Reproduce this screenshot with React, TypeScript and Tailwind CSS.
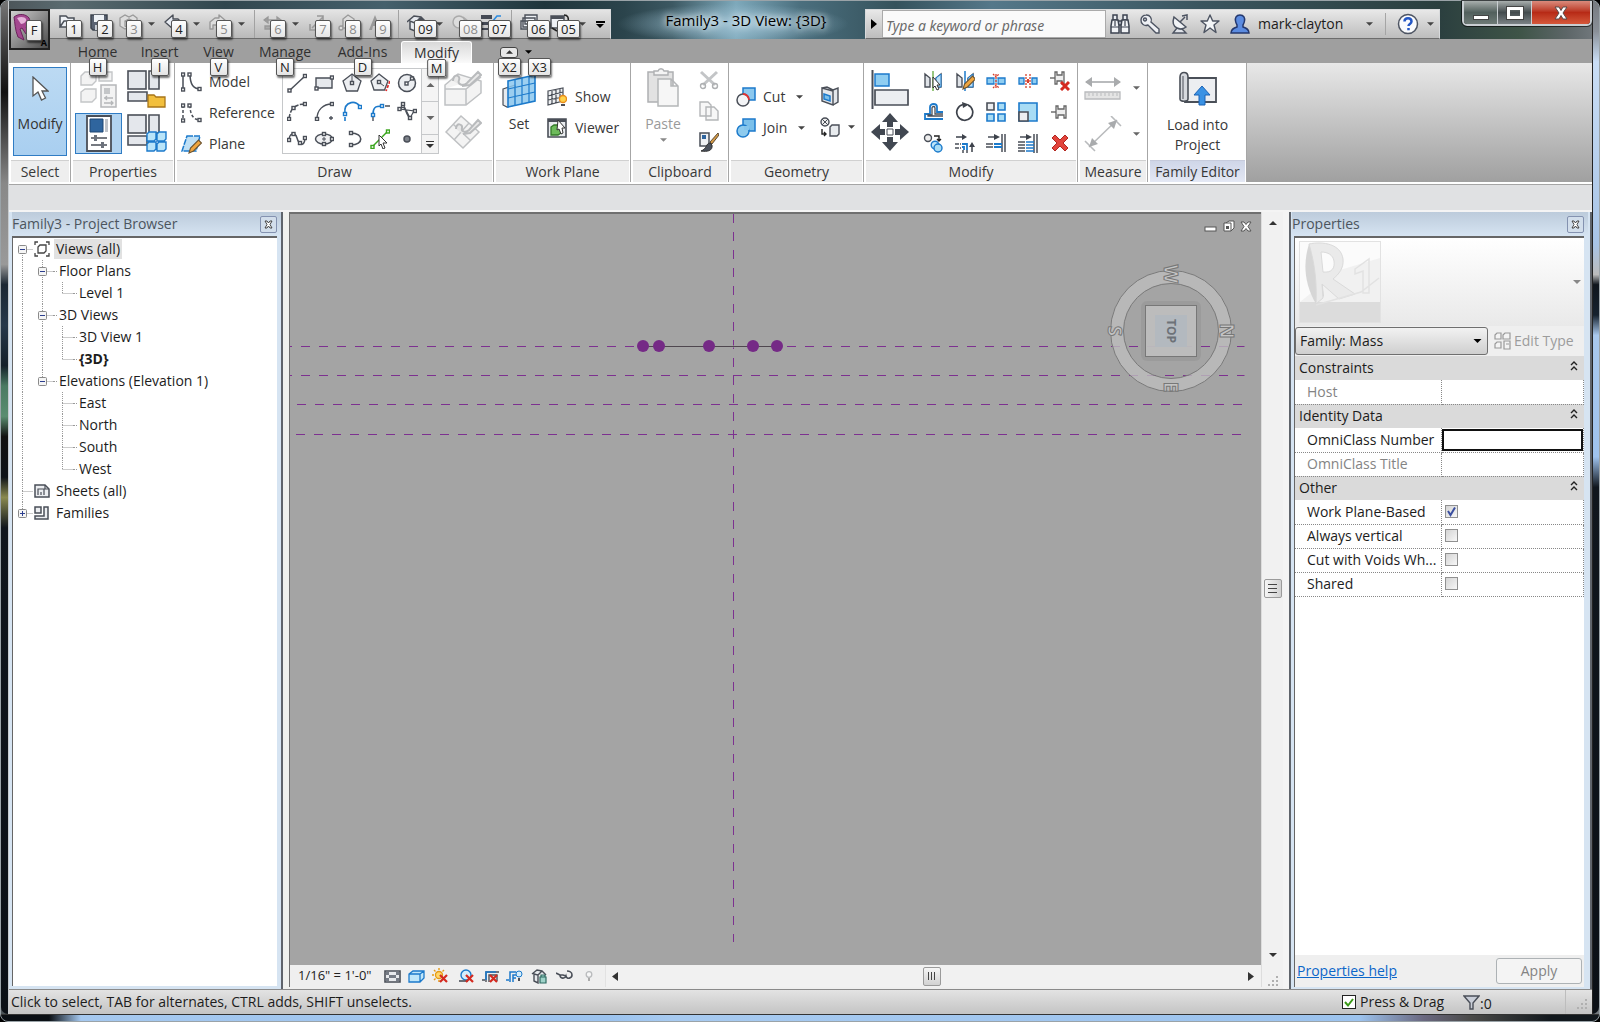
import React from "react";

const D = "#4a4f58";
const B = "#1c7acb";
const L = "#b9bbbd";

type IconProps = { w?: number; h?: number; vb?: string; className?: string; children?: React.ReactNode };

function Ico({ w = 20, h = 20, vb, className = "", children }: IconProps) {
  return (
    <svg
      width={w}
      height={h}
      viewBox={vb ?? `0 0 ${w} ${h}`}
      fill="none"
      className={`block shrink-0 ${className}`}
      aria-hidden="true"
    >
      {children}
    </svg>
  );
}

function Node({ x, y, c = D }: { x: number; y: number; c?: string }) {
  return <rect x={x - 1.5} y={y - 1.5} width="3" height="3" fill="#fff" stroke={c} strokeWidth="1.4" />;
}

function Caret({ className = "text-[#444]", w = 7 }: { className?: string; w?: number }) {
  return (
    <svg width={w} height="4" viewBox="0 0 8 4" className={`block shrink-0 ${className}`} aria-hidden="true">
      <path d="M0 0h8L4 4z" fill="currentColor" />
    </svg>
  );
}

function KeyTip({ children, muted = false, className = "" }: { children: React.ReactNode; muted?: boolean; className?: string }) {
  return (
    <span
      className={`absolute z-20 flex h-[18px] min-w-[16px] items-center justify-center rounded-[2px] border border-[#555] bg-gradient-to-b from-white to-[#e4e4e4] px-[3px] text-[13px] leading-none shadow-[1px_2px_2px_rgba(0,0,0,0.55)] ${muted ? "text-[#8a8a8a]" : "text-[#222]"} ${className}`}
    >
      {children}
    </span>
  );
}

/* ---------- quick access toolbar ---------- */

const quickIcons: Record<string, React.ReactNode> = {
  open: <path d="M1 13V2h6l2 2h6v3M1 13l4-6h13l-4 6z" fill="#eef1f5" stroke={D} strokeWidth="1.5" />,
  save: (
    <>
      <path d="M1 1h16v15H3l-2-2z" fill="#5a6372" stroke="#3d444f" strokeWidth="1.5" />
      <path d="M4 1h10v7H4z" fill="#eef2f6" />
      <path d="M5 11h8v5H5z" fill="#c9ced6" />
    </>
  ),
  cube: (
    <path d="M1 4l5-3 4 2 4-2 4 3v8l-4 3-4-2-4 2-5-3zM6 7l4-2 4 2v5l-4 2-4-2zM6 7l4 2 4-2M10 9v5" fill="#ddd" stroke="#999" strokeWidth="1.3" />
  ),
  undo: <path d="M1 8l8-7v4h5l4 4v6h-3v-4H9v4z" fill="#e7ebf2" stroke={D} strokeWidth="1.4" strokeLinejoin="round" />,
  redo: <path d="M17 7l-7-6v3H6L1 8v7h3v-4h6v3z" fill="#ddd" stroke="#999" strokeWidth="1.4" strokeLinejoin="round" />,
  dims: <path d="M1 6h17M1 6l4-3v6zM18 6l-4-3v6zM2 12h14v3H2z" fill="#aaa" stroke="#999" strokeWidth="1.3" />,
  align: <path d="M4 14L15 3M9 2h6v6M2 10v6h6M13 13h5" stroke="#999" strokeWidth="1.6" />,
  tag: <path d="M5 13V5l5-4 6 4v9H5M1 14a2 2 0 104 0 2 2 0 00-4 0" fill="#ddd" stroke="#999" strokeWidth="1.4" />,
  text: <path d="M1 16L7 1l6 15H9l-1-4H5l-1 4z" fill="#999" />,
  home: <path d="M0 8l7-6 7 1 5 5M3 7v8l5 2V9zM8 9l5-5 5 5v6" fill="#e6e9ee" stroke={D} strokeWidth="1.5" />,
  section: <path d="M1 8a6 6 0 1012 0 6 6 0 10-12 0M11 3l6 5-6 4" fill="#ddd" stroke="#aaa" strokeWidth="1.5" />,
  thin: (
    <>
      <path d="M0 1h11v4H0zM0 8h9v3H0zM0 14h12v2H0z" fill="#454a55" />
      <path d="M11 8l5-6h4" stroke="#2b8be0" strokeWidth="1.6" />
    </>
  ),
  close: <path d="M5 1h12v9H5zM3 4h12v9H3zM1 7h11v8H1z" fill="#eef1f5" stroke={D} strokeWidth="1.4" />,
  swap: (
    <>
      <path d="M1 2h13v12H1z" fill="#eef1f5" stroke={D} strokeWidth="1.4" />
      <path d="M1 2h13v3H1z" fill={D} />
      <path d="M14 1c4 0 5 3 4 7M2 14l5 3" stroke="#222" strokeWidth="1.6" />
    </>
  ),
};

type QItem = { id?: string; tip?: string; name?: string; cls?: string; muted?: boolean; arrow?: boolean; sep?: boolean };

const quickItems: QItem[] = [
  { id: "open", tip: "1", name: "Open", cls: "w-[31px]" },
  { id: "save", tip: "2", name: "Save", cls: "w-[29px]" },
  { id: "cube", tip: "3", name: "Synchronize", cls: "w-[45px]", muted: true, arrow: true },
  { id: "undo", tip: "4", name: "Undo", cls: "w-[45px]", arrow: true },
  { id: "redo", tip: "5", name: "Redo", cls: "w-[45px]", muted: true, arrow: true },
  { sep: true },
  { id: "dims", tip: "6", name: "Measure", cls: "w-[45px]", muted: true, arrow: true },
  { id: "align", tip: "7", name: "Aligned dimension", cls: "w-[30px]", muted: true },
  { id: "tag", tip: "8", name: "Tag", cls: "w-[30px]", muted: true },
  { id: "text", tip: "9", name: "Text", cls: "w-[30px]", muted: true },
  { sep: true },
  { id: "home", tip: "09", name: "Default 3D view", cls: "w-[45px]", arrow: true },
  { id: "section", tip: "08", name: "Section", cls: "w-[29px]", muted: true },
  { id: "thin", tip: "07", name: "Thin lines", cls: "w-[30px]" },
  { sep: true },
  { id: "close", tip: "06", name: "Close hidden windows", cls: "w-[30px]" },
  { id: "swap", tip: "05", name: "Switch windows", cls: "w-[40px]", arrow: true },
];

function QuickAccess() {
  return (
    <div className="mt-2 flex h-[30px] items-stretch border border-l-0 border-[#d8dadc] border-b-[#6d6d6d] bg-gradient-to-b from-[#e4e4e4] to-[#b9b9b9] pl-[9px]">
      {quickItems.map((q, i) =>
        q.sep ? (
          <span key={i} className="mr-2 w-px bg-[#a2a2a2]" />
        ) : (
          <button key={i} type="button" aria-label={q.name} className={`relative flex pt-1 ${q.cls}`}>
            <Ico w={20} h={18}>{quickIcons[q.id!]}</Ico>
            {q.arrow && <Caret className="mt-2 ml-[9px] text-[#444]" w={7} />}
            <KeyTip muted={q.muted} className="top-[10px] left-[7px]">{q.tip}</KeyTip>
          </button>
        )
      )}
      <button type="button" aria-label="Customize toolbar" className="flex w-[20px] flex-col items-center justify-center gap-px">
        <span className="h-[2px] w-[9px] bg-black" />
        <Caret w={10} className="text-black" />
      </button>
    </div>
  );
}

/* ---------- title bar ---------- */

function InfoCenter() {
  return (
    <div className="mt-2 flex h-[30px] w-[575px] shrink-0 border border-[#d8dadc] border-b-[#6d6d6d] bg-gradient-to-b from-[#e8e8e8] to-[#bdbdbd]">
      <button type="button" aria-label="Expand search" className="flex w-4 items-center justify-center">
        <svg width="6" height="10" viewBox="0 0 6 10"><path d="M0 0l6 5-6 5z" fill="#000" /></svg>
      </button>
      <input
        type="text"
        aria-label="Search"
        placeholder="Type a keyword or phrase"
        className="w-[224px] border border-[#aaa] bg-[#fafafa] px-[3px] pt-1 font-['Noto_Sans',sans-serif] text-sm outline-none placeholder:text-[#6b6b6b] placeholder:italic"
      />
      <div className="flex flex-1 items-center">
        <button type="button" aria-label="Search" className="ml-1">
          <Ico w={20} h={20}>
            <path d="M3 1h4v5H3zM13 1h4v5h-4z" fill="#e9ecf1" stroke="#3c4350" strokeWidth="1.5" />
            <path d="M8 7h4v4H8z" fill="#b9bec8" stroke="#3c4350" strokeWidth="1.3" />
            <path d="M2 6h6l1 6v7H1v-7zM12 6h6l1 6v7h-8v-7z" fill="#f1f3f6" stroke="#3c4350" strokeWidth="1.5" />
            <path d="M1 13h8M11 13h8M5 7v5M15 7v5" stroke="#3c4350" strokeWidth="1.2" />
          </Ico>
        </button>
        <button type="button" aria-label="Subscription center" className="ml-[10px]">
          <Ico w={20} h={20}>
            <path d="M6 1a5 5 0 00-5 5 5 5 0 007 5l8 8h3v-4l-8-7a5 5 0 00-5-7zM5 4a1.5 1.5 0 110 3 1.5 1.5 0 010-3z" fill="#eef0f4" stroke="#4d5462" strokeWidth="1.4" />
          </Ico>
        </button>
        <button type="button" aria-label="Communication center" className="ml-[10px]">
          <Ico w={20} h={20}>
            <path d="M7 14l-4 5h13l-4-4z" fill="#dfe2e8" stroke="#4d5462" strokeWidth="1.4" />
            <path d="M4 3l12 10c-4 4-16 2-12-10z" fill="#f1f3f6" stroke="#4d5462" strokeWidth="1.5" />
            <path d="M10 8l5-5M12 2l5-1v5" stroke="#4d5462" strokeWidth="1.5" />
          </Ico>
        </button>
        <button type="button" aria-label="Favorites" className="ml-[10px]">
          <Ico w={20} h={20}>
            <path d="M10 1l2.7 6H19l-5 4 2 7.5-6-4.5-6 4.5 2-7.5-5-4h6.3z" fill="#f3f5f7" stroke="#4d5462" strokeWidth="1.4" strokeLinejoin="round" />
          </Ico>
        </button>
        <button type="button" className="ml-[10px] flex items-center text-sm text-[#1c1c1c]">
          <Ico w={20} h={20}>
            <path d="M10 1c-4 0-5 3-4.500 6 .3 2 1 3 1.500 4v2c-3 1-6 2-6 6h18c0-4-3-5-6-6v-2c.5-1 1.200-2 1.500-4C15 4 14 1 10 1z" fill="#5b8be0" stroke="#24386e" strokeWidth="1.5" />
          </Ico>
          <span className="ml-2">mark-clayton</span>
        </button>
        <Caret className="ml-auto text-[#444]" />
        <span className="mr-[11px] ml-3 h-[22px] w-px bg-[#a5a5a5]" />
        <button type="button" aria-label="Help" className="flex items-center">
          <Ico w={22} h={22}>
            <circle cx="11" cy="11" r="9.5" fill="#fafbfd" stroke="#4d5462" strokeWidth="1.5" />
            <path d="M7.5 8.500c0-4.500 7-4.500 7 0 0 2.500-3 2.500-3 4.500M11.500 15v2.200" stroke="#2457c5" strokeWidth="2.5" />
          </Ico>
          <Caret className="mr-[5px] ml-2 text-[#444]" />
        </button>
      </div>
    </div>
  );
}

function WindowButtons() {
  return (
    <div className="ml-auto flex h-[25px] w-[130px] shrink-0 rounded-b-[5px] border-2 border-t-0 border-[#c9ced2] bg-[#222] outline outline-1 outline-black/60">
      <button type="button" aria-label="Minimize" className="flex flex-1 items-end justify-center rounded-bl-[3px] bg-gradient-to-b from-[#a9afae] via-[#52605d] via-50% to-[#6d7a76] pb-1">
        <span className="h-[5px] w-4 border border-[#444] bg-white" />
      </button>
      <button type="button" aria-label="Maximize" className="flex flex-1 items-center justify-center border-l border-[#c9ced2] bg-gradient-to-b from-[#a9afae] via-[#444c4e] via-50% to-[#7b8285]">
        <span className="h-3 w-4 border-[3px] border-white outline outline-1 outline-[#444]" />
      </button>
      <button type="button" aria-label="Close" className="flex w-[59px] items-center justify-center rounded-br-[3px] border-l border-[#c9ced2] bg-gradient-to-b from-[#d98a7c] via-[#b72a16] via-50% to-[#d5573a]">
        <Ico w={16} h={14}>
          <path d="M2 1h4l2 3.500L10 1h4l-4 6 4 6h-4L8 9.500 6 13H2l4-6z" fill="#fff" stroke="#5a4a48" strokeWidth="1" />
        </Ico>
      </button>
    </div>
  );
}

function TitleBar() {
  return (
    <header className="flex h-[38px] shrink-0 items-start">
      <button
        type="button"
        aria-label="Application menu"
        className="relative z-10 mt-2 h-[41px] w-[41px] shrink-0 border-2 border-[#222] bg-gradient-to-br from-[#cfcfcf] via-[#8d8d8d] to-[#4c4c4c]"
      >
        <Ico w={34} h={36}>
          <path d="M3 5c5-4 12-3 15 1 2 4 0 7-3 9l5 9-5-2-4-6-2 1 4 11-6-3C4 18 4 11 3 5z" fill="#a3478f" stroke="#6b245c" />
          <path d="M6 6c4-2 8-1 9 1s-2 5-5 5z" fill="#e5b3da" />
        </Ico>
        <KeyTip className="top-[9px] left-[15px] h-[21px]">F</KeyTip>
        <span className="absolute right-px bottom-px text-[9px] leading-none font-bold text-black">A</span>
      </button>
      <QuickAccess />
      <h1 className="flex h-[38px] min-w-0 flex-1 items-center justify-center truncate bg-[radial-gradient(ellipse_at_48%_60%,#9cc0d2_0,transparent_62%)] pl-4 text-[15px] text-black [text-shadow:0_0_6px_#fff,0_0_10px_#e5f1f6]">
        Family3 - 3D View: {"{3D}"}
      </h1>
      <InfoCenter />
      <div className="flex w-[152px] shrink-0">
        <WindowButtons />
      </div>
    </header>
  );
}

/* ---------- ribbon ---------- */

const tabs = [
  { name: "Home", tip: "H", cls: "w-[61px]" },
  { name: "Insert", tip: "I", cls: "w-[63px]" },
  { name: "View", tip: "V", cls: "w-[55px]" },
  { name: "Manage", tip: "N", cls: "w-[78px]" },
  { name: "Add-Ins", tip: "D", cls: "w-[77px]" },
  { name: "Modify", tip: "M", cls: "w-[71px]" },
];

function TabRow() {
  return (
    <nav className="flex h-6 shrink-0 items-end bg-[#9f9f9f] pl-[58px] text-sm text-[#303030]">
      {tabs.map((t) => (
        <button
          key={t.name}
          type="button"
          className={`relative flex h-[22px] items-center justify-center ${t.cls} ${
            t.name === "Modify" ? "rounded-t-[3px] border border-b-0 border-white bg-gradient-to-b from-[#d9d9d9] to-[#fafafa]" : ""
          }`}
        >
          {t.name}
          <KeyTip className="top-[17px] left-1/2 min-w-[18px] -translate-x-1/2">{t.tip}</KeyTip>
        </button>
      ))}
      <button type="button" aria-label="Minimize ribbon" className="relative ml-7 flex h-[22px] w-[18px] items-center">
        <span className="flex h-[11px] w-[18px] items-center justify-center rounded-[3px] border border-[#444] bg-[#e8e8e8]">
          <Caret className="rotate-180 text-[#333]" w={7} />
        </span>
        <KeyTip className="top-[17px] -left-[2px]">X2</KeyTip>
      </button>
      <button type="button" aria-label="Ribbon options" className="relative ml-[7px] flex h-[22px] items-center">
        <Caret className="text-black" w={7} />
        <KeyTip className="top-[17px] left-[3px]">X3</KeyTip>
      </button>
    </nav>
  );
}

function Panel({ title, cls, tint = false, children }: { title: string; cls: string; tint?: boolean; children: React.ReactNode }) {
  return (
    <section className={`flex shrink-0 flex-col border-r border-[#a6a6a6] bg-white pr-px pl-0.5 ${cls}`}>
      <div className="flex h-[97px] min-w-0">{children}</div>
      <h2
        className={`flex h-[22px] items-center justify-center border-t text-sm whitespace-nowrap text-[#383838] ${
          tint ? "border-[#c6cbdc] bg-gradient-to-b from-[#cfd6e8] to-[#e4e8f4]" : "border-[#d0d0d0] bg-[#eeeeee]"
        }`}
      >
        {title}
      </h2>
    </section>
  );
}

function Shapes() {
  return (
    <>
      <rect x="1" y="1" width="18" height="18" fill="#e4e7ec" stroke={D} strokeWidth="1.6" />
      <path d="M1 22v9h19v-9zM22 19V1h10v18z" fill="#e4e7ec" stroke={D} strokeWidth="1.6" />
    </>
  );
}

const pencil = (
  <path d="M8 18l1.500-5 8-8 3 3-8 8z" fill="#f0a640" stroke="#6d5430" strokeWidth="1.1" />
);

const drawTools: { name: string; art: React.ReactNode }[] = [
  { name: "Line", art: <><path d="M2 18L18 3" stroke={D} strokeWidth="1.5" /><Node x={2.5} y={17.5} /><Node x={18} y={3} /></> },
  { name: "Rectangle", art: <><path d="M2 5h16v10H2z" fill="#e6e9ed" stroke={D} strokeWidth="1.4" /><Node x={18} y={4.5} /><Node x={2.5} y={15.5} /></> },
  { name: "Inscribed polygon", art: <><path d="M10 1l9 7-3.500 10h-11L1 8z" fill="#eceef1" stroke={D} strokeWidth="1.3" /><path d="M10 1v9" stroke={D} /><Node x={10} y={10} /></> },
  { name: "Circumscribed polygon", art: <><path d="M9 1l9 7-3.500 9H4L1 8z" fill="#eceef1" stroke={D} strokeWidth="1.3" /><Node x={9} y={9} /><path d="M10 10l4 3" stroke={D} /><path d="M20 8l-4 10" stroke="#e03030" strokeWidth="1.8" strokeDasharray="3 1.5" /></> },
  { name: "Circle", art: <><circle cx="10" cy="10" r="8.5" fill="#eceef1" stroke={D} strokeWidth="1.5" /><path d="M10 10l5-4" stroke={D} /><Node x={9.5} y={10.5} /><Node x={15} y={5.5} /></> },
  { name: "Start-end arc", art: <><path d="M2 18C3 8 8 3 18 3" stroke={D} strokeWidth="1.5" strokeDasharray="5 1.5" /><Node x={2} y={18} /><Node x={6.5} y={7} /><Node x={18} y={3} /></> },
  { name: "Center-ends arc", art: <><path d="M3 18C3 9 9 3 18 3" stroke={D} strokeWidth="1.4" /><Node x={3} y={18} /><Node x={18} y={3} /><path d="M15 17h4M17 15v4" stroke={D} strokeWidth="1.3" /></> },
  { name: "Tangent arc", art: <><path d="M3 13C1-1 16-1 18 6M3 16v4" stroke={B} strokeWidth="1.6" /><Node x={3} y={13} c={B} /><Node x={18} y={6} c={B} /></> },
  { name: "Fillet arc", art: <><path d="M3 13c0-6 2-8 9-8" stroke={B} strokeWidth="1.6" /><path d="M3 16v4M15 5h5" stroke={D} strokeWidth="1.4" /><Node x={3} y={14} c={B} /><Node x={12} y={5} c={B} /></> },
  { name: "Spline", art: <><path d="M3 8l3-5 7 14 4-7zM3 8c6-6 5 6 10 9" stroke={D} strokeWidth="1.2" /><Node x={2.5} y={8} /><Node x={6} y={3} /><Node x={13} y={17} /><Node x={18} y={10} /></> },
  { name: "Spline through points", art: <><path d="M2 12c0-8 6-10 8-3s7 9 8 1" stroke={D} strokeWidth="1.5" /><Node x={2} y={11} /><Node x={6.5} y={5} /><Node x={13} y={14} /><Node x={18} y={9} /></> },
  { name: "Ellipse", art: <><ellipse cx="10" cy="10" rx="8.5" ry="5" fill="#f0f1f3" stroke={D} strokeWidth="1.5" /><path d="M8 10h4M10 8v4" stroke={D} /><Node x={10} y={5} /><Node x={10} y={15} /><Node x={18} y={10} /></> },
  { name: "Partial ellipse", art: <><path d="M9 4c13 0 13 12 0 12" stroke={D} strokeWidth="1.6" /><Node x={9} y={4} /><Node x={9} y={16} /></> },
  { name: "Pick lines", art: <><path d="M2 18L18 2" stroke="#3aa51d" strokeWidth="1.5" /><Node x={2.5} y={18} c="#3aa51d" /><Node x={18} y={2.5} c="#3aa51d" /><path d="M9 6l8 8h-4l2 5-2 1-2-5-2 2z" fill="#fff" stroke="#333" /></> },
  { name: "Point", art: <circle cx="10" cy="10" r="3" fill="#7d828a" stroke={D} strokeWidth="1.5" /> },
];

const mirror = <path d="M2 3l5 4v9H2zM18 3l-5 4v9h5z" fill="#dfe3e8" stroke={D} strokeWidth="1.4" />;

const modifyTools: { name: string; art: React.ReactNode }[] = [
  { name: "Mirror - pick axis", art: <>{mirror}<path d="M10 0v20" stroke="#61a83a" strokeWidth="1.3" /><path d="M18 3l-5 4v9h5z" fill="#bfe0f5" stroke={B} /><path d="M10 6l7 8h-3l2 4-2 1-2-4-2 2z" fill="#fff" stroke="#333" /></> },
  { name: "Mirror - draw axis", art: <>{mirror}<path d="M10 0v20" stroke={B} strokeWidth="1.5" /><path d="M18 3l-5 4v9h5z" fill="#bfe0f5" stroke={B} />{pencil}</> },
  { name: "Split element", art: <><path d="M1 7h7v6H1zM12 7h7v6h-7z" fill="#8fcdf1" stroke={B} strokeWidth="1.3" /><path d="M8 8h4v4H8z" fill="#8fcdf1" /><path d="M10 3v14M7 3l3 3 3-3M7 17l3-3 3 3" stroke="#d8402c" strokeWidth="1.3" strokeDasharray="2 1" /></> },
  { name: "Split with gap", art: <><path d="M1 7h5v6H1zM14 7h5v6h-5z" fill="#8fcdf1" stroke={B} strokeWidth="1.3" /><path d="M8 3v14M12 3v14" stroke="#d8402c" strokeWidth="1.3" strokeDasharray="2 1" /><path d="M10 8v4" stroke="#d8402c" strokeWidth="2" /></> },
  { name: "Unpin", art: <><path d="M0 7h5" stroke="#666" strokeWidth="1.4" /><path d="M5 1h2v3h5V1h2v12h-2v-3H7v3H5z" fill="#eee" stroke="#666" strokeWidth="1.3" /><path d="M11 11l8 8M19 11l-8 8" stroke="#d42a20" strokeWidth="3" /></> },
  { name: "Offset", art: <><path d="M20 17H2v-5h5V5c0-4 7-4 7 0v5h6" fill="none" stroke={B} strokeWidth="1.8" /><path d="M20 14H5v-1h4V6c0-2 3-2 3 0v6h8" stroke={D} strokeWidth="1.3" /></> },
  { name: "Rotate", art: <><path d="M13 3a8 8 0 11-5-.5" stroke="#3d424b" strokeWidth="1.7" /><path d="M7 0l7 2.500L8 6z" fill="#3d424b" /></> },
  { name: "Array", art: <><path d="M1 1h7v7H1z" fill="#eceef1" stroke={D} strokeWidth="1.6" /><path d="M12 1h7v7h-7zM1 12h7v7H1zM12 12h7v7h-7z" fill="#a8dcf5" stroke={B} strokeWidth="1.6" /></> },
  { name: "Scale", art: <><path d="M1 1h18v18H1z" fill="#a8dcf5" stroke={B} strokeWidth="1.6" /><path d="M1 10h9v9H1z" fill="#eceef1" stroke={D} strokeWidth="1.6" /></> },
  { name: "Pin", art: <><path d="M1 10h5" stroke="#666" strokeWidth="1.4" /><path d="M6 4h2v3h6V4h2v12h-2v-3H8v3H6z" fill="#eee" stroke="#666" strokeWidth="1.3" /></> },
  { name: "Copy", art: <><circle cx="5" cy="5" r="3.5" fill="#eee" stroke={D} strokeWidth="1.4" /><path d="M11 3h5v4M14 6l2 2 2-2" stroke="#222" strokeWidth="1.4" /><circle cx="12" cy="12" r="3.8" fill="#bfe6fa" stroke={B} strokeWidth="1.4" /><circle cx="15" cy="15" r="4" fill="#a8dcf5" stroke={B} strokeWidth="1.4" /></> },
  { name: "Trim to corner", art: <><path d="M1 4h6M17 19v-6" stroke="#3d424b" strokeWidth="1.5" /><path d="M7 1l5 3-5 3zM14 14l3-5 3 5z" fill="#3d424b" /><path d="M0 11h6M0 15h6M8 20v-3M12 20v-3" stroke={D} strokeWidth="1.5" strokeDasharray="4 1" /><path d="M7 11h5v6M7 14h2v3" stroke={B} strokeWidth="1.8" /></> },
  { name: "Trim single", art: <><path d="M2 4h6M16 1v18M19 1v18M0 11h7M0 14h7" stroke={D} strokeWidth="1.5" /><path d="M8 1l6 3-6 3z" fill="#3d424b" /><path d="M8 11h8M8 14h8" stroke={B} strokeWidth="1.8" /></> },
  { name: "Trim multiple", art: <><path d="M2 4h6M16 1v19M19 1v19M0 9h7M0 12h7M0 15h7M0 18h7" stroke={D} strokeWidth="1.5" /><path d="M8 1l6 3-6 3z" fill="#3d424b" /><path d="M8 9h8M8 12h8M8 15h8M8 18h8" stroke={B} strokeWidth="1.5" /></> },
  { name: "Delete", art: <path d="M2 5l3-3 5 5 5-5 3 3-5 5 5 5-3 3-5-5-5 5-3-3 5-5z" fill="#e2443c" stroke="#b3261f" /> },
];

function Ribbon() {
  return (
    <div className="flex h-[121px] shrink-0 overflow-hidden border-b-2 border-white bg-gradient-to-b from-[#e8e8e8] to-[#a0a0a0]">
      <Panel title="Select" cls="w-[62px]">
        <button type="button" className="mx-0.5 mt-1 flex h-[89px] flex-1 flex-col items-center border border-[#2f7cc4] bg-gradient-to-b from-[#bcdaf3] to-[#a9cff0] text-sm text-[#333]">
          <Ico w={18} h={28} className="mt-2">
            <path d="M2 1v19l5-4 3.500 8 4-2-3.500-7h6z" fill="#fff" stroke="#555" strokeWidth="1.3" />
          </Ico>
          <span className="mt-2.5">Modify</span>
        </button>
      </Panel>

      <Panel title="Properties" cls="w-[104px]">
        <div className="grid flex-1 grid-cols-[51px_1fr] grid-rows-[44px_44px] items-center pt-1">
          <button type="button" aria-label="Family category" className="flex justify-center">
            <Ico w={38} h={38}>
              <path d="M1 6l4-4h11v9l-4 4H1zM1 22l4-3h11v9l-4 4H1zM19 6l3-4h10v9H19z" fill="#f3f3f3" stroke="#c4c6c8" strokeWidth="1.4" />
              <path d="M21 15h15v22H21z" fill="#f3f3f3" stroke="#b5b7b9" strokeWidth="1.5" />
              <path d="M24 18h6v6h-6z" fill="#c4c6c8" />
              <path d="M24 28h9M24 33h9M27 26l-2 2 2 2M31 31l2 2-2 2" stroke="#b5b7b9" strokeWidth="1.3" />
            </Ico>
          </button>
          <button type="button" aria-label="Type properties" className="flex justify-start pl-[3px]">
            <Ico w={40} h={38}>
              <Shapes />
              <path d="M21 25h6l2 2h9v10H21z" fill="#f2bf3d" stroke="#a8761a" strokeWidth="1.3" />
            </Ico>
          </button>
          <button type="button" aria-label="Properties" className="ml-0.5 flex h-[41px] w-[47px] items-center justify-center border border-[#2f7cc4] bg-[#b2d4f1]">
            <Ico w={26} h={37}>
              <path d="M1 1h24v35H1z" fill="#fff" stroke={D} strokeWidth="1.8" />
              <path d="M4 4h13v13H4z" fill="#2f659e" stroke="#1f4672" />
              <path d="M19 4h3v13h-3z" fill="#bfc3c9" />
              <path d="M5 23h16M5 30h16" stroke={D} strokeWidth="1.6" />
              <path d="M8 20h3v6H8zM15 27h3v6h-3z" fill="#6c727c" />
            </Ico>
          </button>
          <button type="button" aria-label="Family types" className="flex justify-start pl-[3px]">
            <Ico w={40} h={38}>
              <Shapes />
              <path d="M20 20l2-2h7v7l-2 2h-7zM30 20l2-2h7v7l-2 2h-7zM20 30l2-2h7v7l-2 2h-7zM30 30l2-2h7v7l-2 2h-7z" fill="#b9e4f9" stroke={B} strokeWidth="1.4" />
            </Ico>
          </button>
        </div>
      </Panel>

      <Panel title="Draw" cls="w-[319px]">
        <div className="flex w-[105px] flex-col gap-[11px] pt-[9px] pl-1 text-sm text-[#383838]">
          <button type="button" className="flex h-5 items-center gap-[7px]">
            <Ico w={21} h={20}><path d="M2 2v16M9 2c0 9 3 15 10 15" stroke={D} strokeWidth="1.5" /><Node x={2} y={2.5} /><Node x={2} y={17.5} /><Node x={8.5} y={2.5} /><Node x={18.5} y={17} /></Ico>
            Model
          </button>
          <button type="button" className="flex h-5 items-center gap-[7px]">
            <Ico w={21} h={20}><path d="M2 2v16M9 2c0 9 3 15 10 15" stroke={D} strokeWidth="1.5" strokeDasharray="3 2" /><Node x={2} y={2.5} /><Node x={2} y={17.5} /><Node x={8.5} y={2.5} /><Node x={18.5} y={17} /></Ico>
            Reference
          </button>
          <button type="button" className="flex h-5 items-center gap-[7px]">
            <Ico w={21} h={20}><path d="M6 2h13l-4 15H1z" fill="#bfe0f5" stroke={B} strokeWidth="1.5" strokeDasharray="6 1" /><g transform="translate(0 1)">{pencil}</g></Ico>
            Plane
          </button>
        </div>
        <div className="mt-[5px] flex h-[86px] border border-[#c6c8ca]">
          <div className="grid w-[138px] grid-cols-5 grid-rows-3 place-items-center">
            {drawTools.map((t) => (
              <button key={t.name} type="button" aria-label={t.name}><Ico>{t.art}</Ico></button>
            ))}
          </div>
          <div className="flex w-[17px] flex-col bg-[#f4f4f4]">
            <button type="button" aria-label="Scroll tools up" className="flex flex-1 items-center justify-center border-b border-l border-[#c6c8ca]"><Caret className="rotate-180 text-[#666]" w={9} /></button>
            <button type="button" aria-label="Scroll tools down" className="flex flex-1 items-center justify-center border-b border-l border-[#c6c8ca]"><Caret className="text-[#666]" w={9} /></button>
            <button type="button" aria-label="All tools" className="flex h-[18px] flex-col items-center justify-center gap-0.5 border-l border-[#c6c8ca]"><span className="h-px w-2 bg-[#333]" /><Caret className="text-[#333]" w={8} /></button>
          </div>
        </div>
        <div className="flex flex-col gap-[6px] pt-[6px] pl-[5px]">
          <button type="button" aria-label="Draw on face">
            <Ico w={38} h={38}><path d="M1 16L14 5l23 7v12L22 36H1zM1 20h21l15-12M22 20v16" fill="#f3f3f3" stroke="#bfc1c3" strokeWidth="1.5" /><path d="M9 12c0-8 8-6 6-1s4 6 8 3L34 3l3 3-11 10-8 1" fill="#e8e8e8" stroke={L} strokeWidth="2" /></Ico>
          </button>
          <button type="button" aria-label="Draw on work plane">
            <Ico w={38} h={38}><path d="M2 19L17 3l18 16-16 16zM9 11l17 16M25 10L10 27" fill="#f3f3f3" stroke="#bfc1c3" strokeWidth="1.5" /><path d="M12 16c0-7 7-5 6-1s4 5 7 2L34 7l3 3-11 10-7 1" fill="#e8e8e8" stroke={L} strokeWidth="2" /></Ico>
          </button>
        </div>
      </Panel>

      <Panel title="Work Plane" cls="w-[137px]">
        <button type="button" className="flex w-[46px] flex-col items-center pt-[10px] text-sm text-[#383838]">
          <Ico w={34} h={36}><path d="M1 16l12-4v20l-8 2-4-2z" fill="#e7eaee" stroke={D} strokeWidth="1.2" /><path d="M6 8l27-6v26L6 34z" fill="#8cc8ee" fillOpacity=".85" stroke={B} strokeWidth="1.6" /><path d="M13 6v26M20 5v26M27 3v26M6 16l27-6M6 25l27-6" stroke={B} strokeWidth="1.2" /></Ico>
          <span className="mt-[5px]">Set</span>
        </button>
        <div className="flex flex-col gap-[11px] pt-6 pl-[5px] text-sm text-[#383838]">
          <button type="button" className="flex h-5 items-center gap-2">
            <Ico><path d="M1 4l15-3v13L1 18zM5 3v14M9 2v14M13 2v12M1 9l15-4M1 13l15-3" fill="#eef0f2" stroke={D} strokeWidth="1.2" /><circle cx="16" cy="12" r="3.5" fill="#ffd24a" stroke="#e88b1a" strokeWidth="1.3" /><path d="M14 17h4v2h-4z" fill={D} /></Ico>
            Show
          </button>
          <button type="button" className="flex h-5 items-center gap-2">
            <Ico><path d="M1 1h18v18H1z" fill="#e9ecef" stroke={D} strokeWidth="1.6" /><path d="M1 1h18v3H1z" fill={D} /><path d="M4 9l3-2h7v8l-3 2H4z" fill="#6dbb5b" stroke="#337a28" strokeWidth="1.3" /><path d="M11 2l7 8h-3l1 5-2 1-2-5-2 1z" fill="#fff" stroke="#333" /></Ico>
            Viewer
          </button>
        </div>
      </Panel>

      <Panel title="Clipboard" cls="w-[98px]">
        <button type="button" className="flex w-[60px] flex-col items-center pt-[5px] text-sm text-[#9a9a9a]">
          <Ico w={34} h={40}><path d="M2 4h25v30H2z" fill="#e2e2e2" stroke="#aeb0b2" strokeWidth="1.5" /><path d="M8 7V3h4c1-3 5-3 6 0h4v4z" fill="#f4f4f4" stroke="#aeb0b2" strokeWidth="1.4" /><path d="M12 11h13l7 7v20H12zM25 11v7h7" fill="#f6f6f6" stroke="#b4b6b8" strokeWidth="1.5" /></Ico>
          <span className="mt-1.5">Paste</span>
          <Caret className="mt-1 text-[#888]" w={7} />
        </button>
        <div className="flex flex-col gap-[11px] pt-[7px] pl-[6px]">
          <button type="button" aria-label="Cut to clipboard"><Ico><path d="M2 2l14 13M18 2L4 15" stroke="#c3c5c7" strokeWidth="3" /><circle cx="4" cy="16" r="2.5" stroke="#aeb0b2" strokeWidth="1.4" /><circle cx="16" cy="16" r="2.5" stroke="#aeb0b2" strokeWidth="1.4" /></Ico></button>
          <button type="button" aria-label="Copy to clipboard"><Ico><path d="M1 1h8l3 3v11H1zM7 6h8l4 4v9H7z" fill="#f7f7f7" stroke="#b4b6b8" strokeWidth="1.4" /></Ico></button>
          <button type="button" aria-label="Match type"><Ico><path d="M1 1h9v13H1z" fill="#eef0f3" stroke={D} strokeWidth="1.5" /><path d="M3 3h4v4H3z" fill="#2f659e" /><path d="M19 1l-8 9 2 2 7-9z" fill="#d59a45" stroke="#5a4a35" /><path d="M11 11c-4 0-3 6-9 8 6 1 12 0 11-6z" fill="#49505b" stroke="#333" /></Ico></button>
        </div>
      </Panel>

      <Panel title="Geometry" cls="w-[135px]">
        <div className="flex w-[82px] flex-col gap-[11px] pt-6 pl-[5px] text-sm text-[#383838]">
          <button type="button" className="flex h-5 items-center gap-[7px]">
            <Ico><path d="M7 1h12v12H7z" fill="#8cc8ee" stroke={B} strokeWidth="1.5" /><circle cx="7" cy="13" r="6" fill="#f3f4f6" stroke={D} strokeWidth="1.5" /><path d="M7 7a6 6 0 016 6" stroke="#e23131" strokeWidth="1.8" /></Ico>
            Cut
            <Caret className="ml-1 text-[#444]" w={7} />
          </button>
          <button type="button" className="flex h-5 items-center gap-[7px]">
            <Ico><path d="M7 1h12v12H7z" fill="#7cc0ea" stroke={B} strokeWidth="1.5" /><circle cx="7" cy="13" r="6" fill="#8ecbee" stroke={B} strokeWidth="1.5" /><path d="M8 8h5v4H8z" fill="#85c5ec" /></Ico>
            Join
            <Caret className="ml-1 text-[#444]" w={7} />
          </button>
        </div>
        <div className="flex flex-col gap-[11px] pt-[23px] pl-[7px]">
          <button type="button" aria-label="Cope"><Ico><path d="M2 2l11 3v14L2 15zM2 2l5-1 6 3 5-2v14l-5 3" fill="#e4e7eb" stroke={D} strokeWidth="1.4" /><path d="M4 8l6 2v5l-6-2z" fill="#7cc0ea" stroke={B} strokeWidth="1.5" /></Ico></button>
          <button type="button" aria-label="Split face" className="flex items-center gap-2"><Ico><circle cx="5" cy="5" r="4" fill="#eee" stroke={D} strokeWidth="1.4" /><path d="M2 2l6 6M8 2L2 8" stroke={D} /><path d="M2 12v5h4M4 15l2 2-2 2" stroke="#222" strokeWidth="1.4" /><path d="M10 10l2-2h7v9l-2 2h-7z" fill="#e8ebee" stroke={D} strokeWidth="1.4" /></Ico><Caret className="text-[#444]" w={7} /></button>
        </div>
      </Panel>

      <Panel title="Modify" cls="w-[214px]">
        <div className="flex w-[50px] flex-col gap-1 pt-[6px] pl-[5px]">
          <button type="button" aria-label="Align"><Ico w={38} h={40}><path d="M1.500 1v39" stroke={D} strokeWidth="2" /><path d="M4 5h14v12H4z" fill="#8fcdf1" stroke={B} strokeWidth="1.5" /><path d="M4 21h33v15H4z" fill="#eceef1" stroke={D} strokeWidth="1.7" /></Ico></button>
          <button type="button" aria-label="Move"><Ico w={38} h={38}><path d="M19 0l8 9h-5v5h-6V9h-5zM19 38l8-9h-5v-5h-6v5h-5zM0 19l9-8v5h5v6H9v5zM38 19l-9-8v5h-5v6h5v5z" fill="#414751" /><path d="M16 16h6v6h-6z" fill="#fff" stroke={D} /></Ico></button>
        </div>
        <div className="ml-px grid w-[159px] grid-cols-5 grid-rows-[31px_31px_31px] place-items-center pt-0.5">
          {modifyTools.map((t) => (
            <button key={t.name} type="button" aria-label={t.name}><Ico>{t.art}</Ico></button>
          ))}
        </div>
      </Panel>

      <Panel title="Measure" cls="w-[70px]">
        <div className="flex flex-col gap-[9px] pt-1.5 pl-1">
          <button type="button" aria-label="Measure" className="flex items-center gap-[11px]"><Ico w={38} h={38}><path d="M2 13h34" stroke={L} strokeWidth="2" /><path d="M1 13l7-5v10zM37 13l-7-5v10z" fill="#a9abad" /><path d="M1 23h35v7H1z" fill="#e4e4e4" stroke={L} strokeWidth="1.3" /><path d="M5 24v3M9 24v3M13 24v3M17 24v3M21 24v3M25 24v3M29 24v3M33 24v3" stroke={L} /></Ico><Caret className="text-[#666]" w={7} /></button>
          <button type="button" aria-label="Aligned dimension" className="flex items-center gap-[11px]"><Ico w={38} h={36}><path d="M5 31L33 4M1 25l10 10M27 0l10 10" stroke={L} strokeWidth="1.6" /><path d="M5 31l3-9 6 6zM33 4l-3 9-6-6z" fill="#a9abad" /></Ico><Caret className="text-[#666]" w={7} /></button>
        </div>
      </Panel>

      <Panel title="Family Editor" cls="w-[99px]" tint>
        <button type="button" className="flex flex-1 flex-col items-center pt-2 text-sm leading-5 text-[#383838]">
          <Ico w={38} h={36}><path d="M5 7h32v24H6z" fill="#eceef1" stroke={D} strokeWidth="1.8" /><path d="M1 6c0-6 8-6 8 0v22c0 3-8 3-8 0z" fill="#d6d9de" stroke={D} strokeWidth="1.6" /><path d="M4 5v23" stroke={D} /><path d="M23 15l8 9h-5v10h-6V24h-5z" fill="#3a92e4" stroke="#1b62b5" /></Ico>
          <span className="mt-2">Load into</span>
          <span>Project</span>
        </button>
      </Panel>
    </div>
  );
}

/* ---------- project browser ---------- */

type Row = { label: string; guides: string; bold?: boolean; icon?: "views" | "sheets" | "families"; selected?: boolean };

/* guide codes: "-" root box, "+" expand box, "n" nested box, "e" last nested box,
   "|" through line, "t" tee, "l" last branch, " " blank */
const tree: Row[] = [
  { label: "Views (all)", guides: "-", icon: "views", selected: true },
  { label: "Floor Plans", guides: "|n" },
  { label: "Level 1", guides: "||l" },
  { label: "3D Views", guides: "|n" },
  { label: "3D View 1", guides: "||t" },
  { label: "{3D}", guides: "||l", bold: true },
  { label: "Elevations (Elevation 1)", guides: "|e" },
  { label: "East", guides: "| t" },
  { label: "North", guides: "| t" },
  { label: "South", guides: "| t" },
  { label: "West", guides: "| l" },
  { label: "Sheets (all)", guides: "t", icon: "sheets" },
  { label: "Families", guides: "+", icon: "families" },
];

const treeIcons = {
  views: <path d="M1 4V1h3M12 1h3v3M15 12v3h-3M4 15H1v-3M4 6l2-2h6v6l-2 2H4z" stroke="#444" strokeWidth="1.3" />,
  sheets: (
    <>
      <path d="M1 2h10l4 4v8H1z" fill="#eceef1" stroke={D} strokeWidth="1.5" />
      <path d="M4 12V6h6v6M7 12V9M11 2v4h4" stroke={D} strokeWidth="1.2" />
    </>
  ),
  families: <path d="M1 2h6v6H1zM10 2h4v12H1v-3h9z" fill="#eceef1" stroke={D} strokeWidth="1.5" />,
};

function Guides({ code }: { code: string }) {
  const cells = code.split("");
  return (
    <Ico w={cells.length * 20} h={22}>
      {cells.map((c, i) => {
        const x = i * 20 + 9.5;
        const box = "-+ne".includes(c);
        const top = c !== " " && c !== "-";
        const bottom = "|t-n".includes(c);
        return (
          <g key={i} stroke="#999" strokeDasharray="1 1">
            {top && <path d={`M${x} 0V11`} />}
            {bottom && <path d={`M${x} 11V22`} />}
            {c !== "|" && c !== " " && <path d={`M${x} 11.500H${i * 20 + 20}`} />}
            {box && (
              <g strokeDasharray="none">
                <rect x={x - 4} y="7.5" width="8" height="8" rx="1" fill="#f5f5f5" stroke="#8a8a8a" />
                <path d={c === "+" ? `M${x - 2.5} 11.500h5M${x} 9v5` : `M${x - 2.5} 11.500h5`} stroke="#2d3f8f" />
              </g>
            )}
          </g>
        );
      })}
    </Ico>
  );
}

function PaneHeader({ title }: { title: string }) {
  return (
    <div className="flex h-6 shrink-0 items-center bg-gradient-to-b from-[#bccbdb] to-[#d6e4f2] pr-1 text-sm text-[#4c555e]">
      <h2 className="flex-1 truncate">{title}</h2>
      <button type="button" aria-label={`Close ${title}`} className="flex size-[17px] items-center justify-center rounded-[2px] border border-[#8492b0] bg-[#d2deeb]">
        <Ico w={9} h={9}><path d="M1 1h2l1.500 2L6 1h2L6 4.500 8 8H6L4.500 6 3 8H1l2-3.500z" fill="#fff" stroke="#333" strokeWidth=".9" /></Ico>
      </button>
    </div>
  );
}

function ProjectBrowser() {
  return (
    <aside className="flex w-[274px] shrink-0 flex-col border-r-2 border-[#5f646b] bg-[#d6e4f2] pb-[3px] pl-[3px]">
      <PaneHeader title="Family3 - Project Browser" />
      <ul className="mr-1 min-h-0 flex-1 border-t-2 border-l border-[#666] bg-white text-sm text-[#1c1c1c]">
        {tree.map((r) => (
          <li key={r.label} className="flex h-[22px] items-center">
            <Guides code={r.guides} />
            {r.icon && <Ico w={16} h={16} className="mr-1 ml-px">{treeIcons[r.icon]}</Ico>}
            {!r.icon && <span className="w-1 border-t border-dotted border-[#999]" />}
            <span className={r.selected ? "bg-[#e1e1e1] px-0.5" : r.bold ? "px-0.5 font-bold" : "px-0.5"}>{r.label}</span>
          </li>
        ))}
      </ul>
    </aside>
  );
}

/* ---------- drawing area ---------- */

function Letter({ x, y, children }: { x: number; y: number; children: string }) {
  return (
    <text
      x={x}
      y={y}
      transform={`rotate(90 ${x} ${y})`}
      textAnchor="middle"
      dominantBaseline="central"
      fontSize="19"
      fontWeight="700"
      fill="#c4c4c4"
      stroke="#777"
      strokeWidth="1"
    >
      {children}
    </text>
  );
}

function ViewCube() {
  return (
    <svg width="152" height="152" viewBox="-8 -8 152 152" className="absolute top-[41px] right-[14px]" role="img" aria-label="View cube, top">
      <circle cx="68" cy="68" r="54" fill="none" stroke="#bdbdbd" strokeOpacity=".8" strokeWidth="13" />
      <circle cx="68" cy="68" r="60.500" fill="none" stroke="#7a7a7a" />
      <circle cx="68" cy="68" r="47.500" fill="none" stroke="#7a7a7a" />
      <rect x="38" y="38" width="60" height="60" rx="6" fill="#8d8d8d" opacity=".35" />
      <rect x="42.500" y="42.500" width="51" height="51" fill="#bebebe" fillOpacity=".93" stroke="#777" />
      <rect x="52" y="52" width="32" height="32" fill="#b3b9bf" />
      <text x="68" y="68" transform="rotate(90 68 68)" textAnchor="middle" dominantBaseline="central" fontSize="12" fontWeight="700" fill="#6d7278">TOP</text>
      <Letter x={68} y={11}>W</Letter>
      <Letter x={124} y={68}>N</Letter>
      <Letter x={68} y={124}>E</Letter>
      <Letter x={12} y={68}>S</Letter>
    </svg>
  );
}

const refPoints = [353, 369, 419, 463, 487];

function Drawing() {
  return (
    <div className="relative min-h-0 flex-1 overflow-hidden border-t-2 border-l border-[#6f6f6f] bg-[#a4a4a4]">
      <svg className="absolute inset-0 size-full" aria-label="Reference planes" role="img">
        <g stroke="#7d3190" strokeWidth="1" strokeDasharray="9 9" shapeRendering="crispEdges">
          <path d="M443 0V728" />
          <svg x="0" y="0" width="98.300%" height="100%">
            <path d="M-7 132.500H4000" />
            <path d="M-7 161.500H4000" />
            <path d="M7 190.500H4000" />
            <path d="M6 220.500H4000" />
          </svg>
        </g>
        <path d="M353 132.500H487" stroke="#a4a4a4" strokeWidth="2" />
        <path d="M353 132.500H487" stroke="#4f474f" />
        {refPoints.map((x) => (
          <circle key={x} cx={x} cy="132" r="6" fill="#752a86" />
        ))}
      </svg>
      <div className="absolute top-[5px] right-[9px] flex items-center gap-[5px]">
        <button type="button" aria-label="Minimize view"><Ico w={13} h={14}><rect x="1" y="8" width="11" height="4" fill="#fff" stroke="#555" /></Ico></button>
        <button type="button" aria-label="Restore view"><Ico w={13} h={14}><path d="M4 4l3-2h5v7l-3 3" fill="#fff" stroke="#555" /><path d="M2 4h7v8H2z" fill="#fff" stroke="#555" /><path d="M4 7h3v3H4z" fill="#555" /></Ico></button>
        <button type="button" aria-label="Close view"><Ico w={12} h={14}><path d="M1 3h3l2 2.500L8 3h3L8 7.500l3 4.500H8L6 9.500 4 12H1l3-4.500z" fill="#fff" stroke="#555" /></Ico></button>
      </div>
      <ViewCube />
    </div>
  );
}

function redX(x: number, y: number) {
  return <path d={`M${x} ${y}l7 7M${x + 7} ${y}l-7 7`} stroke="#d42a20" strokeWidth="2.2" />;
}

const viewControls: { name: string; art: React.ReactNode; cls?: string }[] = [
  { name: "Detail level", art: <><path d="M1 3h15v11H1z" fill="#e8eaed" stroke={D} strokeWidth="1.6" /><path d="M2 4h3v3H2zM12 4h3v3h-3zM2 10h3v3H2zM12 10h3v3h-3zM5 7h7v3H5z" fill="#757b85" /></> },
  { name: "Visual style", art: <path d="M1 6l4-3h11v7l-4 4H1zM1 6h11v8M12 6l4-3" fill="#bfe6fa" stroke={B} strokeWidth="1.3" /> },
  { name: "Sun path", art: <><circle cx="7" cy="7" r="3.5" fill="#ffd86b" stroke="#e59a15" strokeWidth="1.3" /><path d="M7 0v2M7 12v2M0 7h2M2 2l1.500 1.500M12 2l-1.500 1.500M2 12l1.500-1.500" stroke="#e59a15" strokeWidth="1.4" />{redX(8, 7)}</> },
  { name: "Shadows", art: <><circle cx="8" cy="7" r="5" fill="#d5edfb" stroke={B} strokeWidth="1.4" /><path d="M1 13h9" stroke={D} strokeWidth="1.6" />{redX(8, 7)}</>, cls: "ml-0.5" },
  { name: "Crop view", art: <><path d="M0 12h3M4 14V4h13M7 14V7h8v6" stroke={D} strokeWidth="1.4" /><path d="M4 12V4h10" stroke={B} strokeWidth="1.6" />{redX(8, 7)}</> },
  { name: "Show crop region", art: <><path d="M0 12h3M4 14V4h6M7 14V7h4M7 10h3" stroke={B} strokeWidth="1.5" /><circle cx="13" cy="6" r="3" fill="#d5edfb" stroke={B} /><path d="M12 10h2v3h-2z" fill={D} /></> },
  { name: "Lock 3D view", art: <><path d="M1 6l5-4 5 1 4 4M3 6v7l4 2V7zM7 7l4-4" fill="#e8eaed" stroke={D} strokeWidth="1.4" /><path d="M9 9h6v6H9zM10 9V7h4v2" fill="#9fd3c9" stroke="#2f6b62" strokeWidth="1.2" /></>, cls: "ml-px" },
  { name: "Temporary hide", art: <path d="M0 5l4 2c0 4 5 4 6 1 1 4 6 2 6-1 0-3-3-4-5-4M4 7h3l3 1" stroke={D} strokeWidth="1.6" />, cls: "ml-px" },
  { name: "Reveal hidden", art: <><circle cx="8" cy="6.5" r="2.8" fill="#f7f7f7" stroke={L} strokeWidth="1.3" /><path d="M7 10h2v3H7z" fill="#aaa" /></>, cls: "ml-px" },
];

function ViewBar() {
  return (
    <div className="flex h-[22px] shrink-0 items-center border-l border-[#6f6f6f] bg-[#efefef] pl-2 text-[13px] text-[#222]">
      <button type="button" className="mr-2 w-[78px] text-left whitespace-nowrap">1/16" = 1'-0"</button>
      {viewControls.map((v) => (
        <button key={v.name} type="button" aria-label={v.name} className={`mr-[7px] ${v.cls ?? ""}`}>
          <Ico w={17} h={16}>{v.art}</Ico>
        </button>
      ))}
      <div className="flex h-full min-w-0 flex-1 items-center border-l border-[#e2e2e2] bg-[#f1f1f1]">
        <button type="button" aria-label="Scroll left" className="flex w-[17px] justify-center"><svg width="6" height="9" viewBox="0 0 6 9"><path d="M6 0v9L0 4.500z" fill="#333" /></svg></button>
        <div className="flex flex-1 justify-center">
          <div className="flex h-[19px] w-[18px] items-center justify-center gap-[2px] rounded-[2px] border border-[#9a9a9a] bg-gradient-to-b from-[#f5f5f5] to-[#d2d2d2]">
            <span className="h-2 w-px bg-[#444]" /><span className="h-2 w-px bg-[#444]" /><span className="h-2 w-px bg-[#444]" />
          </div>
        </div>
        <button type="button" aria-label="Scroll right" className="flex w-[21px] justify-center"><svg width="6" height="9" viewBox="0 0 6 9"><path d="M0 0v9l6-4.500z" fill="#333" /></svg></button>
      </div>
    </div>
  );
}

function Grip() {
  return (
    <Ico w={12} h={12}>
      <path d="M9 1h2v2H9zM5 5h2v2H5zM9 5h2v2H9zM1 9h2v2H1zM5 9h2v2H5zM9 9h2v2H9z" fill="#b0b0b0" />
    </Ico>
  );
}

function Workspace() {
  return (
    <main className="flex min-w-0 flex-1 border-l-[6px] border-[#f0f1ee] bg-[#efefef] pb-0.5">
      <div className="flex min-w-0 flex-1 flex-col">
        <Drawing />
        <ViewBar />
      </div>
      <div className="flex w-[22px] shrink-0 flex-col items-center border-l border-[#ddd] bg-[#f1f1f1]">
        <button type="button" aria-label="Scroll up" className="flex h-[21px] items-center"><Caret className="rotate-180 text-[#333]" w={10} /></button>
        <div className="flex flex-1 items-center">
          <div className="flex h-[19px] w-[18px] flex-col items-center justify-center gap-[3px] rounded-[2px] border border-[#9a9a9a] bg-gradient-to-r from-[#f5f5f5] to-[#d2d2d2]">
            <span className="h-px w-[9px] bg-[#444]" /><span className="h-px w-[9px] bg-[#444]" /><span className="h-px w-[9px] bg-[#444]" />
          </div>
        </div>
        <button type="button" aria-label="Scroll down" className="flex h-[21px] items-center"><Caret className="text-[#333]" w={10} /></button>
        <div className="flex h-[22px] w-full items-end justify-end pr-1"><Grip /></div>
      </div>
    </main>
  );
}

/* ---------- properties ---------- */

type Prop = { label: string; kind: "group" | "text" | "check"; muted?: boolean; checked?: boolean; focus?: boolean };

const props: Prop[] = [
  { label: "Constraints", kind: "group" },
  { label: "Host", kind: "text", muted: true },
  { label: "Identity Data", kind: "group" },
  { label: "OmniClass Number", kind: "text", focus: true },
  { label: "OmniClass Title", kind: "text", muted: true },
  { label: "Other", kind: "group" },
  { label: "Work Plane-Based", kind: "check", checked: true },
  { label: "Always vertical", kind: "check" },
  { label: "Cut with Voids Wh...", kind: "check" },
  { label: "Shared", kind: "check" },
];

function PropertiesPane() {
  return (
    <aside className="flex w-[303px] shrink-0 flex-col border-x-2 border-[#5f646b] bg-[#d6e4f2] pr-[2px] pb-0.5 pl-px">
      <PaneHeader title="Properties" />
      <div className="mr-1 ml-0.5 flex min-h-0 flex-1 flex-col border-t-2 border-l border-[#666] bg-white">
        <div className="flex h-[88px] shrink-0 items-center justify-between bg-gradient-to-b from-white to-[#e9e9e9] pr-0.5 pl-1">
          <svg width="82" height="82" viewBox="0 0 82 82" aria-hidden="true">
            <rect x=".5" y=".5" width="81" height="81" fill="#fbfbfb" stroke="#e2e2e2" />
            <path d="M1 61h80v20H1z" fill="#dcdcdc" />
            <path d="M1 61l40-32 40-12v44z" fill="#f1f1f1" />
            <path d="M10 3C4 22 5 42 17 63l8-8-5-45z" fill="#d6d6d6" />
            <path d="M10 3c14-3 32 0 34 15 1 9-4 15-10 20l22 15-16 5-17-15 1 14-7 6C18 43 16 23 10 3zM22 11l2 20c9 1 12-4 11-11-1-6-6-9-13-9z" fill="#eaeaea" stroke="#dadada" fillRule="evenodd" />
            <path d="M56 28l14-10v34h-6V30l-8 3zM17 64l45-13 18-14" fill="none" stroke="#e2e2e2" strokeWidth="1.5" />
          </svg>
          <Caret className="text-[#888]" w={10} />
        </div>
        <div className="flex h-[30px] shrink-0 items-center bg-[#efefef]">
          <div className="relative flex w-[193px] items-center">
            <select
              aria-label="Family type filter"
              className="h-7 w-full appearance-none rounded-[3px] border border-[#6f6f6f] bg-gradient-to-b from-[#f2f2f2] to-[#cfcfcf] px-1 text-sm text-[#1c1c1c]"
            >
              <option>Family: Mass</option>
            </select>
            <span className="pointer-events-none absolute right-[6px]"><Caret className="text-black" w={9} /></span>
          </div>
          <button type="button" disabled className="ml-1.5 flex items-center gap-[3px] text-sm whitespace-nowrap text-[#9c9c9c]">
            <Ico w={17} h={18}><path d="M1 3l2-2h4v6H1zM1 12l2-2h4v6H1zM9 3l2-2h5v6H9zM10 9h6v8h-6zM12 12h3" fill="#f3f3f3" stroke="#999" strokeWidth="1.2" /></Ico>
            Edit Type
          </button>
        </div>
        <table className="w-full table-fixed border-collapse text-sm text-[#1c1c1c]">
          <colgroup>
            <col className="w-[146px]" />
            <col />
          </colgroup>
          <tbody>
            {props.map((p, i) =>
              p.kind === "group" ? (
                <tr key={p.label} className="h-6 bg-[#dadada]">
                  <th colSpan={2} scope="colgroup" className="p-0 text-left font-normal">
                    <button type="button" className="flex h-[23px] w-full items-center justify-between pr-[6px] pl-1">
                      {p.label}
                      <Ico w={8} h={10} className="mb-1"><path d="M1 4l3-3 3 3M1 9l3-3 3 3" stroke="#222" strokeWidth="1.4" /></Ico>
                    </button>
                  </th>
                </tr>
              ) : (
                <tr key={p.label} className="h-6">
                  <th scope="row" className={`border-r border-b border-dotted border-[#888] p-0 pl-3 text-left font-normal whitespace-nowrap ${p.muted ? "text-[#848484]" : ""}`}>
                    <label htmlFor={`prop-${i}`}>{p.label}</label>
                  </th>
                  <td className="border-r border-b border-dotted border-[#888] p-0">
                    {p.kind === "text" ? (
                      <input
                        id={`prop-${i}`}
                        type="text"
                        disabled={p.muted}
                        className={`block h-[22px] w-full bg-white px-1 outline-none ${p.focus ? "border-2 border-[#111]" : ""}`}
                      />
                    ) : (
                      <span className="relative mb-px ml-[3px] flex size-[13px]">
                        <input id={`prop-${i}`} type="checkbox" defaultChecked={p.checked} className="peer size-[13px] appearance-none border border-[#909090] bg-gradient-to-br from-[#d4d4d4] to-[#f7f7f7]" />
                        <svg width="13" height="13" viewBox="0 0 13 13" fill="none" className="pointer-events-none absolute inset-0 hidden peer-checked:block"><path d="M3 6l2.500 4L10 2.500" stroke="#3b4fa0" strokeWidth="2" /></svg>
                      </span>
                    )}
                  </td>
                </tr>
              )
            )}
          </tbody>
        </table>
        <div className="mt-auto flex h-8 shrink-0 items-center justify-between bg-[#efefef] pr-0.5 pl-0.5 text-sm">
          <a href="#help" className="text-[#0c66c9] underline">Properties help</a>
          <button type="button" disabled className="h-[26px] w-[86px] rounded-[3px] border border-[#adb2b5] bg-[#f4f4f4] text-[#838383]">Apply</button>
        </div>
      </div>
    </aside>
  );
}

function StatusBar() {
  return (
    <footer className="flex h-[25px] shrink-0 items-center border-t border-[#8a8a8a] bg-gradient-to-b from-[#e3e3e3] to-[#c4c4c4] pl-0.5 text-sm text-[#1c1c1c]">
      <span className="flex-1">Click to select, TAB for alternates, CTRL adds, SHIFT unselects.</span>
      <label className="flex w-[121px] items-center gap-1 whitespace-nowrap">
        <span className="relative flex size-[14px]">
          <input type="checkbox" defaultChecked className="peer size-[14px] appearance-none border border-[#222] bg-white" />
          <svg width="14" height="14" viewBox="0 0 14 14" fill="none" className="pointer-events-none absolute inset-0 hidden peer-checked:block"><path d="M3 7l3 3.500L11 4" stroke="#3a9a18" strokeWidth="2" /></svg>
        </span>
        Press &amp; Drag
      </label>
      <button type="button" className="flex w-[102px] items-center" aria-label="Selection filter :0">
        <Ico w={17} h={15}><path d="M1 1h15l-6 7v6H7V8z" fill="#c9ced8" stroke={D} strokeWidth="1.4" /></Ico>
        <span className="mt-1">:0</span>
      </button>
      <span className="h-full w-px bg-[#bdbdbd]" />
      <span className="flex h-full items-end pr-1 pb-1 pl-[10px]"><Grip /></span>
    </footer>
  );
}

export default function App() {
  return (
    <div className="flex h-screen flex-col overflow-hidden bg-black font-['Open_Sans',sans-serif]">
      <div className="flex min-h-0 flex-1 flex-col rounded-[8px] border border-[#9aa3a8] bg-[linear-gradient(90deg,#4b5357_0,#5a6b70_4%,#31464e_14%,#45606c_24%,#1f353c_34%,#2b444c_39%,#3c5862_42%,#7ea9bb_46%,#4b6f7e_50%,#35525c_56%,#55788a_62%,#3a555f_75%,#2b3f3f_90%,#3e5447_95%,#5d6668_98%,#757b80_100%)]">
        <div className="flex min-h-0 flex-1">
          <div className="w-2 shrink-0 rounded-l-[7px] border-r border-[#c7cbce] bg-[linear-gradient(180deg,#777_0,#444_4%,#111_9%,#888_18%,#999_26%,#1b2733_28%,#27384a_32%,#15202a_36%,#4a7a62_38%,#5a8d70_41%,#111_43%,#0d1218_47%,#8a8a50_49%,#10161d_52%,#0b1016_100%)]" />
          <div className="flex min-w-0 flex-1 flex-col">
            <TitleBar />
            <TabRow />
            <Ribbon />
            <div className="h-[26px] shrink-0 border-t border-[#a5a5a5] bg-[#e0e1e3]" />
            <div className="flex min-h-0 flex-1 border-t-2 border-[#f4f4f4] bg-[#f0f1ee]">
              <ProjectBrowser />
              <Workspace />
              <div className="w-1.5 shrink-0 bg-[#f4f4f4]" />
              <PropertiesPane />
            </div>
            <StatusBar />
          </div>
          <div className="w-[7px] shrink-0 rounded-r-[7px] border-l border-[#222] bg-[linear-gradient(180deg,#777b80_0,#8a9098_3%,#c9ddf5_6%,#a8c4e6_24%,#bbb_27%,#10161d_28%,#16222e_31%,#a9c8ec_33%,#9fc3ee_45%,#10161d_48%,#0b1016_100%)]" />
        </div>
        <div className="h-[7px] shrink-0 rounded-b-[7px] border-t border-[#333] bg-[linear-gradient(90deg,#0a0f14_0,#0a0f14_3%,#a5c8ef_5%,#9cc3ee_38%,#a7caf0_42%,#9cc3ee_85%,#6a6880_89%,#4a4a48_92%,#12181d_97%)]" />
      </div>
    </div>
  );
}
